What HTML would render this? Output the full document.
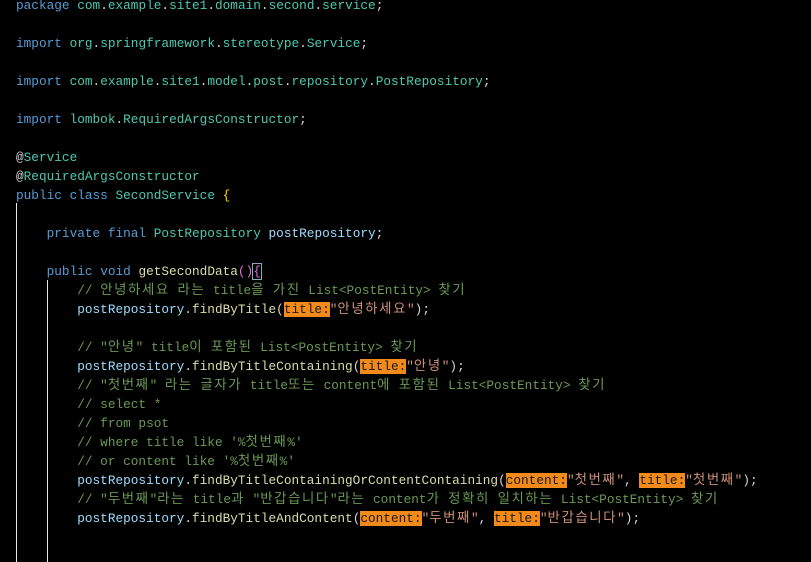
<!DOCTYPE html>
<html><head><meta charset="utf-8"><style>
html,body{margin:0;padding:0;background:#000;width:811px;height:562px;overflow:hidden}
.c{position:absolute;left:16px;top:-4.5px;font-family:"Liberation Mono","Noto Sans CJK KR",monospace;font-size:12.75px;color:#d4d4d4}
.c div{height:19px;line-height:19px;overflow:visible;white-space:pre}
.kw{color:#569cd6}.t{color:#4ec9b0}.v{color:#9cdcfe}.m{color:#dcdcaa}.cm{color:#6a9955}.s{color:#ce9178}.y{color:#ffd700}.p{color:#da70d6}
.h{background:#f28a1b;color:#1a1a1a}
.k{font-family:"Noto Sans CJK KR",sans-serif;font-size:13.4px;line-height:0;letter-spacing:1.6px}
.box{outline:1px solid #8ab;}
.g{position:absolute;width:1px;background:#e8e8e8}
</style></head><body>
<div class="g" style="left:16px;top:203px;height:359px"></div>
<div class="g" style="left:47px;top:280px;height:282px"></div>
<div class="c"><div><span class="kw">package</span> <span class="t">com</span>.<span class="t">example</span>.<span class="t">site1</span>.<span class="t">domain</span>.<span class="t">second</span>.<span class="t">service</span>;</div><div></div><div><span class="kw">import</span> <span class="t">org</span>.<span class="t">springframework</span>.<span class="t">stereotype</span>.<span class="t">Service</span>;</div><div></div><div><span class="kw">import</span> <span class="t">com</span>.<span class="t">example</span>.<span class="t">site1</span>.<span class="t">model</span>.<span class="t">post</span>.<span class="t">repository</span>.<span class="t">PostRepository</span>;</div><div></div><div><span class="kw">import</span> <span class="t">lombok</span>.<span class="t">RequiredArgsConstructor</span>;</div><div></div><div><span>@</span><span class="t">Service</span></div><div><span>@</span><span class="t">RequiredArgsConstructor</span></div><div><span class="kw">public</span> <span class="kw">class</span> <span class="t">SecondService</span> <span class="y">{</span></div><div></div><div>    <span class="kw">private</span> <span class="kw">final</span> <span class="t">PostRepository</span> <span class="v">postRepository</span>;</div><div></div><div>    <span class="kw">public</span> <span class="kw">void</span> <span class="m">getSecondData</span><span class="p">()</span><span class="p box">{</span></div><div>        <span class="cm">// <span class="k">안녕하세요</span> <span class="k">라는</span> title<span class="k">을</span> <span class="k">가진</span> List&lt;PostEntity&gt; <span class="k">찾기</span></span></div><div>        <span class="v">postRepository</span>.<span class="m">findByTitle</span>(<span class="h">title:</span><span class="s">"<span class="k">안녕하세요</span>"</span>);</div><div></div><div>        <span class="cm">// "<span class="k">안녕</span>" title<span class="k">이</span> <span class="k">포함된</span> List&lt;PostEntity&gt; <span class="k">찾기</span></span></div><div>        <span class="v">postRepository</span>.<span class="m">findByTitleContaining</span>(<span class="h">title:</span><span class="s">"<span class="k">안녕</span>"</span>);</div><div>        <span class="cm">// "<span class="k">첫번째</span>" <span class="k">라는</span> <span class="k">글자가</span> title<span class="k">또는</span> content<span class="k">에</span> <span class="k">포함된</span> List&lt;PostEntity&gt; <span class="k">찾기</span></span></div><div>        <span class="cm">// select *</span></div><div>        <span class="cm">// from psot</span></div><div>        <span class="cm">// where title like '%<span class="k">첫번째</span>%'</span></div><div>        <span class="cm">// or content like '%<span class="k">첫번째</span>%'</span></div><div>        <span class="v">postRepository</span>.<span class="m">findByTitleContainingOrContentContaining</span>(<span class="h">content:</span><span class="s">"<span class="k">첫번째</span>"</span>, <span class="h">title:</span><span class="s">"<span class="k">첫번째</span>"</span>);</div><div>        <span class="cm">// "<span class="k">두번째</span>"<span class="k">라는</span> title<span class="k">과</span> "<span class="k">반갑습니다</span>"<span class="k">라는</span> content<span class="k">가</span> <span class="k">정확히</span> <span class="k">일치하는</span> List&lt;PostEntity&gt; <span class="k">찾기</span></span></div><div>        <span class="v">postRepository</span>.<span class="m">findByTitleAndContent</span>(<span class="h">content:</span><span class="s">"<span class="k">두번째</span>"</span>, <span class="h">title:</span><span class="s">"<span class="k">반갑습니다</span>"</span>);</div></div>
</body></html>
